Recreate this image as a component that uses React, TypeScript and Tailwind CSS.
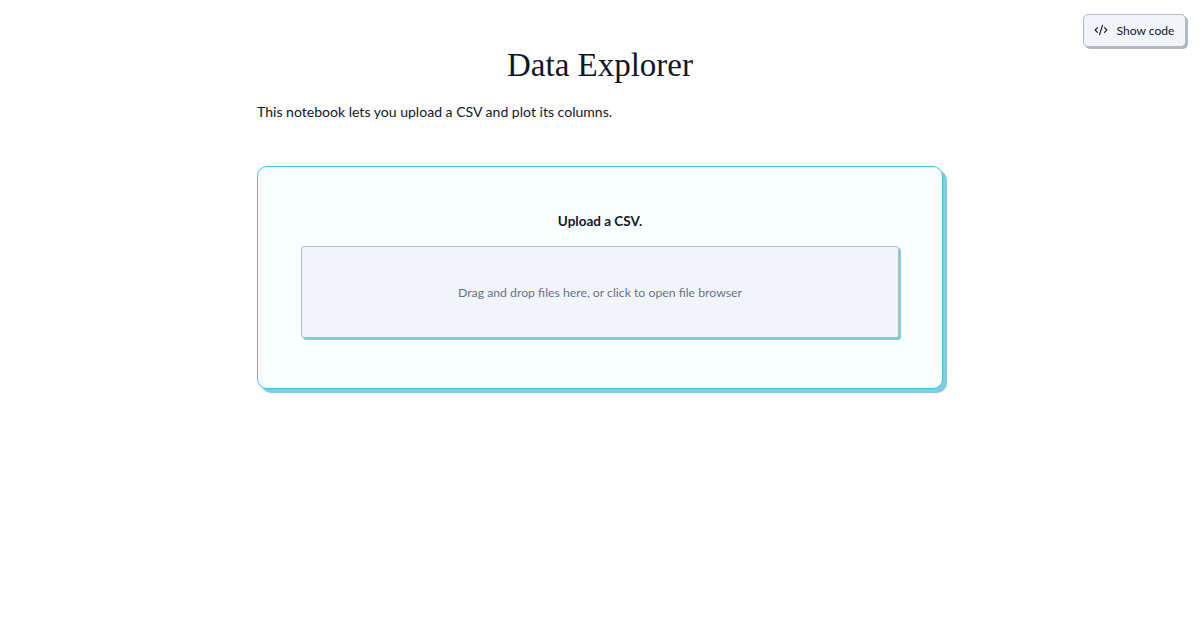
import { CodeXml } from "lucide-react";

export default function App() {
  return (
    <div className="relative h-[630px] w-[1200px] overflow-hidden bg-white text-[#0f172a] font-['Lato','Liberation_Sans',sans-serif]">
      {/* Show code */}
      <button className="absolute right-[14px] top-[14px] flex h-[33px] w-[103px] items-center justify-center gap-[8px] rounded-[5px] border border-[#b4b9c0] bg-[#f1f5f9] pt-px text-[12.1px] shadow-[2px_2px_0_0_#b4b9c0]">
        <CodeXml className="-mt-[2px] h-[14px] w-[14px]" strokeWidth={2} />
        Show code
      </button>

      <main className="mx-auto flex w-[686px] flex-col pt-[44px]">
        <h1 className="text-center font-['Liberation_Serif',serif] text-[33px] leading-[42px]">
          Data Explorer
        </h1>
        <p className="mt-[15px] text-[14.05px] leading-[22px]">
          This notebook lets you upload a CSV and plot its columns.
        </p>

        {/* Upload card */}
        <section className="mt-[43px] flex h-[223px] flex-col rounded-[10px] border border-[#45bfdc] bg-[#f9ffff] px-[43px] pt-[44px] shadow-[4px_4px_0_0_#7fcde2]">
          <h2 className="text-center text-[13.5px] font-bold leading-[20px]">Upload a CSV.</h2>
          <div className="mt-[15px] flex h-[92px] items-center justify-center rounded-[3px] border border-[#b4b9c0] bg-[#f1f5f9] pt-[2px] text-[12.25px] text-[#64748b] shadow-[2px_2px_0_0_#7fcde2]">
            Drag and drop files here, or click to open file browser
          </div>
        </section>
      </main>
    </div>
  );
}
